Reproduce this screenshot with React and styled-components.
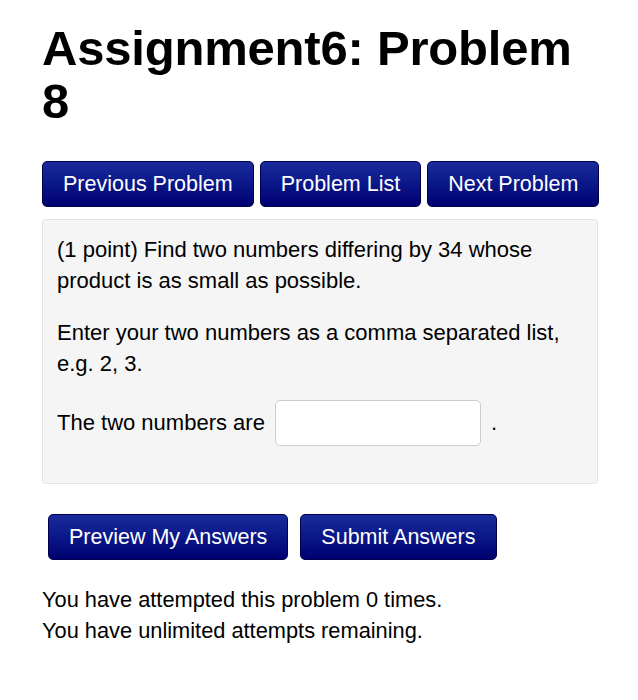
import React from 'react';
import styled, { createGlobalStyle } from 'styled-components';

const GlobalStyle = createGlobalStyle`
  body {
    margin: 0;
    background: #fff;
    font-family: "Liberation Sans", Arial, Helvetica, sans-serif;
    color: #000;
  }
`;

const Page = styled.div`
  padding: 22px 30px 30px 42px;
`;

const Title = styled.h1`
  margin: 0 0 33px 0;
  font-size: 49px;
  line-height: 53px;
  font-weight: bold;
  letter-spacing: -0.2px;
`;

const NavRow = styled.div`
  display: flex;
  gap: 6px;
  margin-bottom: 12px;
`;

const BlueButton = styled.button`
  flex-shrink: 0;
  white-space: nowrap;
  height: 46px;
  padding: 0 20px;
  font-family: "Liberation Sans", Arial, Helvetica, sans-serif;
  font-size: 21.5px;
  color: #fff;
  background: linear-gradient(to bottom, #1a2b9c 0%, #0a1788 50%, #000070 100%);
  border: 1px solid #00004d;
  border-radius: 5px;
  cursor: pointer;
`;

const Panel = styled.div`
  width: 556px;
  box-sizing: border-box;
  background: #f5f5f5;
  border: 1px solid #e3e3e3;
  border-radius: 4px;
  padding: 14px 14px 37px 14px;
`;

const Para = styled.p`
  margin: 0 0 21px 0;
  font-size: 22px;
  line-height: 31px;
`;

const AnswerRow = styled.div`
  display: flex;
  align-items: center;
  font-size: 22px;
`;

const AnswerInput = styled.input`
  width: 206px;
  height: 46px;
  box-sizing: border-box;
  margin: 0 10px 0 10px;
  border: 1px solid #cccccc;
  border-radius: 5px;
  background: #fff;
  font-size: 20px;
`;

const SubmitRow = styled.div`
  display: flex;
  gap: 12px;
  margin: 30px 0 24px 6px;
`;

const Info = styled.div`
  font-size: 21.8px;
  line-height: 31px;
`;

export default function App() {
  return (
    <Page>
      <GlobalStyle />
      <Title>Assignment6: Problem 8</Title>
      <NavRow>
        <BlueButton>Previous Problem</BlueButton>
        <BlueButton>Problem List</BlueButton>
        <BlueButton>Next Problem</BlueButton>
      </NavRow>
      <Panel>
        <Para>(1 point) Find two numbers differing by 34 whose product is as small as possible.</Para>
        <Para>Enter your two numbers as a comma separated list, e.g. 2, 3.</Para>
        <AnswerRow>
          The two numbers are
          <AnswerInput type="text" />
          .
        </AnswerRow>
      </Panel>
      <SubmitRow>
        <BlueButton>Preview My Answers</BlueButton>
        <BlueButton>Submit Answers</BlueButton>
      </SubmitRow>
      <Info>You have attempted this problem 0 times.</Info>
      <Info>You have unlimited attempts remaining.</Info>
    </Page>
  );
}
